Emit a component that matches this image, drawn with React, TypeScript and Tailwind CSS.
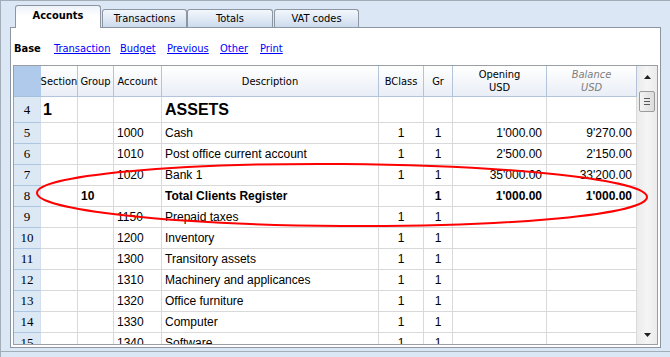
import React from "react";

type Row = {
  n: number;
  section?: string;
  group?: string;
  account?: string;
  desc?: string;
  bclass?: string;
  gr?: string;
  open?: string;
  bal?: string;
  kind?: "section" | "total" | "normal";
};

const rows: Row[] = [
  { n: 4, section: "1", desc: "ASSETS", kind: "section" },
  { n: 5, account: "1000", desc: "Cash", bclass: "1", gr: "1", open: "1'000.00", bal: "9'270.00" },
  { n: 6, account: "1010", desc: "Post office current account", bclass: "1", gr: "1", open: "2'500.00", bal: "2'150.00" },
  { n: 7, account: "1020", desc: "Bank 1", bclass: "1", gr: "1", open: "35'000.00", bal: "33'200.00" },
  { n: 8, group: "10", desc: "Total Clients Register", gr: "1", open: "1'000.00", bal: "1'000.00", kind: "total" },
  { n: 9, account: "1150", desc: "Prepaid taxes", bclass: "1", gr: "1" },
  { n: 10, account: "1200", desc: "Inventory", bclass: "1", gr: "1" },
  { n: 11, account: "1300", desc: "Transitory assets", bclass: "1", gr: "1" },
  { n: 12, account: "1310", desc: "Machinery and applicances", bclass: "1", gr: "1" },
  { n: 13, account: "1320", desc: "Office furniture", bclass: "1", gr: "1" },
  { n: 14, account: "1330", desc: "Computer", bclass: "1", gr: "1" },
  { n: 15, account: "1340", desc: "Software", bclass: "1", gr: "1" },
];

const cell = "shrink-0 border-r border-b border-[#d9d9d9] flex items-center overflow-hidden whitespace-nowrap";
const hcell =
  "shrink-0 border-r border-b border-[#b3c4da] flex items-center justify-center text-center leading-[13px] bg-gradient-to-b from-white to-[#e9eef6]";

function BodyRow({ r }: { r: Row }) {
  const h = r.kind === "section" ? "h-[26px]" : "h-[21px]";
  const bold = r.kind === "total" ? "font-bold" : "";
  return (
    <div className={`flex ${h} text-[12px] text-black font-['Liberation_Sans',Arial,sans-serif]`}>
      <div className="w-[27px] shrink-0 border-r border-r-[#d3dfee] border-b border-b-[#aec5e1] bg-[#dde8f5] flex items-center justify-center font-['Liberation_Serif','Times_New_Roman',serif] text-[13px]">
        {r.n}
      </div>
      <div className={`${cell} w-[37px] pl-[2px] ${r.kind === "section" ? "text-[16px] font-bold" : bold}`}>{r.section}</div>
      <div className={`${cell} w-[36px] pl-[3px] ${bold}`}>{r.group}</div>
      <div className={`${cell} w-[48px] pl-[3px] ${bold}`}>{r.account}</div>
      <div className={`${cell} w-[217px] pl-[3px] ${r.kind === "section" ? "text-[16px] font-bold" : bold}`}>{r.desc}</div>
      <div className={`${cell} w-[45px] justify-center ${bold}`}>{r.bclass}</div>
      <div className={`${cell} w-[29px] justify-center ${bold}`}>{r.gr}</div>
      <div className={`${cell} w-[94px] justify-end pr-[4px] ${bold}`}>{r.open}</div>
      <div className={`${cell} w-[90px] justify-end pr-[4px] ${bold}`}>{r.bal}</div>
    </div>
  );
}

export default function App() {
  return (
    <div className="relative w-[670px] h-[357px] overflow-hidden bg-[#dbe7f4] border-l border-t border-[#a3adb8] font-['DejaVu_Sans_Condensed','DejaVu_Sans',sans-serif] text-[11px] text-black">
      {/* Tabs */}
      <div className="relative z-10 flex items-end h-[26px] pl-[14px]">
        <div className="w-[86px] h-[23px] -mb-px bg-gradient-to-b from-[#eef3fa] via-white to-white border border-b-0 border-[#8c96a3] rounded-t-[3px] flex items-center justify-center font-bold pb-px">
          Accounts
        </div>
        <div className="ml-px w-[85px] h-[18px] pt-[2px] bg-gradient-to-b from-[#f3f7fc] to-[#cddbee] border border-b-0 border-[#8c96a3] rounded-t-[3px] flex items-center justify-center">
          Transactions
        </div>
        <div className="w-[86px] h-[18px] pt-[2px] bg-gradient-to-b from-[#f3f7fc] to-[#cddbee] border border-b-0 border-[#8c96a3] rounded-t-[3px] flex items-center justify-center">
          Totals
        </div>
        <div className="ml-px w-[85px] h-[18px] pt-[2px] bg-gradient-to-b from-[#f3f7fc] to-[#cddbee] border border-b-0 border-[#8c96a3] rounded-t-[3px] flex items-center justify-center">
          VAT codes
        </div>
      </div>

      {/* Panel */}
      <div className="ml-[9px] w-[651px] h-[321px] bg-white border border-[#8c96a3] px-[2px] pb-[2px] flex flex-col">
        <div className="h-[37px] shrink-0 flex items-center pl-px pt-[5px]">
          <span className="w-[40px] shrink-0 font-bold">Base</span>
          <a className="w-[66px] shrink-0 text-[#0000ff] underline">Transaction</a>
          <a className="w-[47px] shrink-0 text-[#0000ff] underline">Budget</a>
          <a className="w-[53px] shrink-0 text-[#0000ff] underline">Previous</a>
          <a className="w-[40px] shrink-0 text-[#0000ff] underline">Other</a>
          <a className="shrink-0 text-[#0000ff] underline">Print</a>
        </div>

        {/* Grid */}
        <div className="w-[645px] h-[280px] border border-[#9a9ea5] flex overflow-hidden">
          <div className="w-[623px] shrink-0 overflow-hidden">
            <div className="flex h-[31px]">
              <div className="w-[27px] shrink-0 bg-[#afcaea] border-b border-[#a6bfdd]" />
              <div className={`${hcell} w-[37px]`}>Section</div>
              <div className={`${hcell} w-[36px]`}>Group</div>
              <div className={`${hcell} w-[48px]`}>Account</div>
              <div className={`${hcell} w-[217px]`}>Description</div>
              <div className={`${hcell} w-[45px]`}>BClass</div>
              <div className={`${hcell} w-[29px]`}>Gr</div>
              <div className={`${hcell} w-[94px]`}>
                Opening
                <br />
                USD
              </div>
              <div className={`${hcell} w-[90px] italic text-[#7d7d7d]`}>
                Balance
                <br />
                USD
              </div>
            </div>
            {rows.map((r) => (
              <BodyRow key={r.n} r={r} />
            ))}
          </div>

          {/* Scrollbar */}
          <div className="w-[20px] shrink-0 h-full bg-gradient-to-r from-[#ebebeb] via-[#f5f4f6] to-[#ebebeb] flex flex-col items-center">
            <div className="h-[20px] w-full flex items-center justify-center pt-[2px]">
              <svg width="7" height="4" viewBox="0 0 7 4">
                <path d="M0 4 L3.5 0 L7 4 Z" fill="#202020" />
              </svg>
            </div>
            <div className="mt-[5px] w-[16px] h-[21px] rounded-[2px] border border-[#9b9b9b] bg-gradient-to-r from-[#f4f4f4] to-[#dcdcdc] flex flex-col items-center justify-center gap-[2px]">
              <div className="w-[6px] h-px bg-[#5a5a5a]" />
              <div className="w-[6px] h-px bg-[#5a5a5a]" />
              <div className="w-[6px] h-px bg-[#5a5a5a]" />
            </div>
            <div className="flex-1" />
            <div className="h-[16px] w-full flex items-center justify-center pb-[2px]">
              <svg width="7" height="4" viewBox="0 0 7 4">
                <path d="M0 0 L7 0 L3.5 4 Z" fill="#202020" />
              </svg>
            </div>
          </div>
        </div>
      </div>

      {/* Bottom strip */}
      <div className="mt-[3px] h-px w-full bg-[#a3adb8]" />

      {/* Red annotation */}
      <svg className="absolute left-0 top-0 pointer-events-none" width="670" height="357" viewBox="0 0 670 357">
        <ellipse cx="341" cy="194" rx="305" ry="31" transform="rotate(0.4 341 194)" fill="none" stroke="#ff0000" strokeWidth="2" />
      </svg>
    </div>
  );
}
